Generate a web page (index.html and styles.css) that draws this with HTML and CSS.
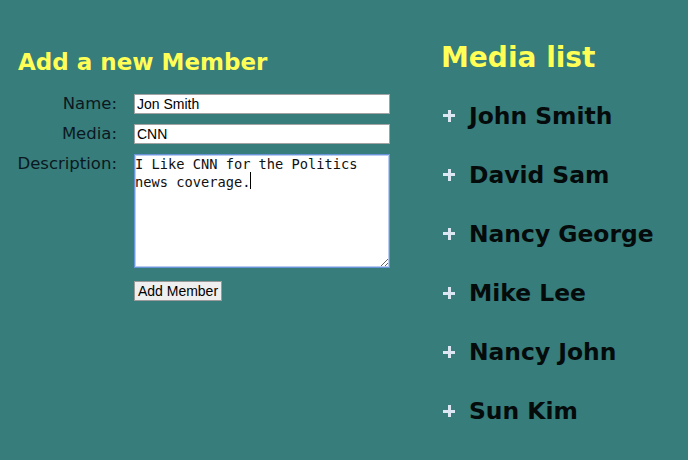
FILE: index.html
```html
<!DOCTYPE html>
<html>
<head>
	<link rel="stylesheet" href="styles.css">
	<title>Members</title>
</head>
<body>
	<div class="page">
		<div class="add_member">
			<h2 class="form_title">Add a new Member</h2>
			<div class="member_form">
				<label class="field_label" for="name">Name:</label>
				<input type="text" id="name" class="text_input" value="Jon Smith">
				<label class="field_label" for="media">Media:</label>
				<input type="text" id="media" class="text_input" value="CNN">
				<label class="field_label" for="description">Description:</label>
				<div class="area_wrap">
					<textarea id="description" class="text_area">I Like CNN for the Politics news coverage.</textarea>
					<span class="caret"></span>
				</div>
				<span></span>
				<div><button class="add_btn">Add Member</button></div>
			</div>
		</div>
		<div class="media_list">
			<h1 class="list_title">Media list</h1>
			<ul class="people">
				<li>John Smith</li>
				<li>David Sam</li>
				<li>Nancy George</li>
				<li>Mike Lee</li>
				<li>Nancy John</li>
				<li>Sun Kim</li>
			</ul>
		</div>
	</div>
</body>
</html>
```

FILE: styles.css
```css
body {
	margin: 0;
	background-color: #367d7b;
	font-family: "DejaVu Sans", Verdana, sans-serif;
}
.page {
	display: flex;
	padding-left: 18px;
}
.add_member {
	width: 423px;
}
.form_title {
	margin: 48px 0 18px 0;
	font-size: 23px;
	line-height: 28px;
	color: #ffff55;
}
.member_form {
	display: grid;
	grid-template-columns: 99px 256px;
	column-gap: 17px;
	row-gap: 10px;
}
.field_label {
	justify-self: end;
	font-size: 16.5px;
	line-height: 20px;
	color: #0c1820;
	white-space: nowrap;
}
.text_input {
	box-sizing: border-box;
	width: 256px;
	height: 20px;
	margin: 0;
	padding: 0 2px;
	border: 1px solid #a3a3a3;
	background: white;
	font-family: "Liberation Sans", Arial, sans-serif;
	font-size: 14px;
	color: black;
}
.area_wrap {
	position: relative;
	height: 114px;
}
.text_area {
	box-sizing: border-box;
	width: 256px;
	height: 114px;
	margin: 0;
	padding: 0;
	border: 1px solid #6a94d8;
	box-shadow: inset 0 0 0 1px #b8cdef;
	outline: none;
	font-family: "DejaVu Sans Mono", monospace;
	font-size: 13.7px;
	line-height: 18px;
	color: #111;
	background: white;
}
.caret {
	position: absolute;
	left: 116px;
	top: 18px;
	width: 1px;
	height: 17px;
	background: black;
}
.add_btn {
	margin-top: 3px;
	width: 88px;
	height: 20px;
	padding: 0;
	border: 1px solid #9a9a9a;
	background: #efefef;
	font-family: "Liberation Sans", Arial, sans-serif;
	font-size: 14px;
	color: black;
}
.list_title {
	margin: 41px 0 26px 0;
	font-size: 28px;
	line-height: 34px;
	color: #ffff55;
}
.people {
	margin: 0;
	padding: 0;
	list-style: none;
}
.people li {
	display: flex;
	align-items: center;
	height: 29px;
	margin-bottom: 30.2px;
	font-size: 23.4px;
	font-weight: bold;
	color: #050a0a;
}
.people li::before {
	content: "";
	width: 12px;
	height: 12px;
	margin: 0 14px 0 2px;
	background:
		linear-gradient(#dde7f3, #dde7f3) center / 12px 3px no-repeat,
		linear-gradient(#dde7f3, #dde7f3) center / 3px 12px no-repeat;
}
```
